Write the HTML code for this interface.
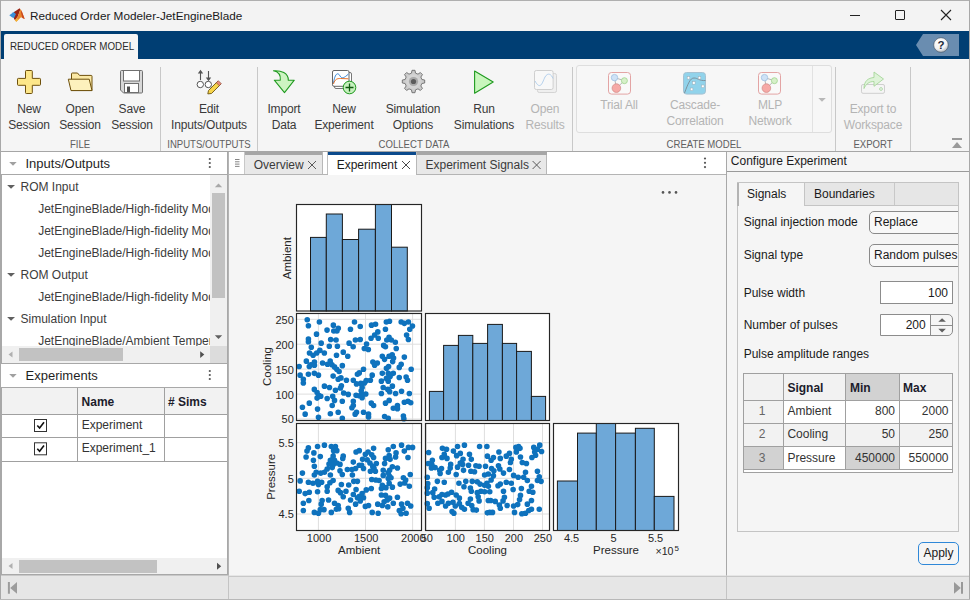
<!DOCTYPE html>
<html><head><meta charset="utf-8">
<style>
*{box-sizing:border-box;margin:0;padding:0}
html,body{width:970px;height:600px;overflow:hidden;background:#f5f5f5}
body{position:relative;font-family:"Liberation Sans",sans-serif;font-size:12px;color:#222}
.a{position:absolute}
.t{position:absolute;white-space:nowrap;line-height:1}
.lbl{position:absolute;white-space:nowrap;line-height:16px;text-align:center;color:#3a3a3a;font-size:12px;letter-spacing:-0.15px}
.dis{color:#b4b4b4}
.sec{position:absolute;white-space:nowrap;line-height:1;text-align:center;color:#606060;font-size:10.3px;transform:scaleX(0.93)}
.sep{position:absolute;width:1px;background:#c8c8c8;top:67px;height:84px}
</style></head><body>

<!-- window frame -->
<div class="a" style="left:0;top:0;width:970px;height:1px;background:#afafaf"></div>
<div class="a" style="left:0;top:0;width:1px;height:600px;background:#a8a8a8"></div>
<div class="a" style="left:969px;top:0;width:1px;height:600px;background:#a8a8a8"></div>

<!-- title bar -->
<div class="a" style="left:1px;top:1px;width:968px;height:30px;background:#f3f3f3"></div>
<div class="t" style="left:30px;top:10px;font-size:11.75px;color:#1a1a1a">Reduced Order Modeler-JetEngineBlade</div>
<!-- window controls -->
<div class="a" style="left:850px;top:15px;width:10px;height:1px;background:#222"></div>
<div class="a" style="left:895px;top:10px;width:10px;height:10px;border:1px solid #222;border-radius:1px"></div>

<!-- blue toolstrip tab bar -->
<div class="a" style="left:1px;top:31px;width:968px;height:28px;background:#003e73"></div>
<div class="a" style="left:4px;top:34px;width:134px;height:25px;background:#f5f5f5;border-radius:2px 2px 0 0"></div>
<div class="t" style="left:9.5px;top:41.3px;font-size:10.6px;transform:scaleX(0.925);transform-origin:0 0;color:#2b2b2b">REDUCED ORDER MODEL</div>

<!-- toolstrip body -->
<div class="a" style="left:1px;top:59px;width:968px;height:92px;background:#f5f5f5"></div>
<div class="a" style="left:1px;top:151px;width:968px;height:1px;background:#a6a6a6"></div>


<!-- toolstrip content -->
<div class="sep" style="left:160px"></div>
<div class="sep" style="left:257px"></div>
<div class="sep" style="left:572px"></div>
<div class="sep" style="left:835px"></div>
<div class="sep" style="left:910px"></div>
<!-- gallery box -->
<div class="a" style="left:576px;top:65px;width:256px;height:68px;border:1px solid #dedede;border-radius:3px;background:#f7f7f7"></div>
<div class="a" style="left:812px;top:66px;width:1px;height:66px;background:#e2e2e2"></div>

<div class="lbl" style="left:0px;top:101px;width:58px">New<br>Session</div>
<div class="lbl" style="left:51px;top:101px;width:58px">Open<br>Session</div>
<div class="lbl" style="left:103px;top:101px;width:58px">Save<br>Session</div>
<div class="lbl" style="left:159px;top:101px;width:100px">Edit<br>Inputs/Outputs</div>
<div class="lbl" style="left:254px;top:101px;width:60px">Import<br>Data</div>
<div class="lbl" style="left:309px;top:101px;width:70px">New<br>Experiment</div>
<div class="lbl" style="left:378px;top:101px;width:70px">Simulation<br>Options</div>
<div class="lbl" style="left:449px;top:101px;width:70px">Run<br>Simulations</div>
<div class="lbl dis" style="left:515px;top:101px;width:60px">Open<br>Results</div>
<div class="lbl dis" style="left:589px;top:97px;width:60px">Trial All</div>
<div class="lbl dis" style="left:659px;top:97px;width:72px">Cascade-<br>Correlation</div>
<div class="lbl dis" style="left:734px;top:97px;width:72px">MLP<br>Network</div>
<div class="lbl dis" style="left:833px;top:101px;width:80px">Export to<br>Workspace</div>

<div class="sec" style="left:50px;top:140px;width:60px">FILE</div>
<div class="sec" style="left:159px;top:140px;width:100px">INPUTS/OUTPUTS</div>
<div class="sec" style="left:364px;top:140px;width:100px">COLLECT DATA</div>
<div class="sec" style="left:654px;top:140px;width:100px">CREATE MODEL</div>
<div class="sec" style="left:833px;top:140px;width:80px">EXPORT</div>

<svg class="a" style="left:0;top:0" width="970" height="152" viewBox="0 0 970 152">
 <!-- title icon -->
 <path d="M9.3 15.3 L13.5 12.3 L15.8 11.2 L17.3 13.5 L14.8 18.3 L12.3 17.5 Z" fill="#3a8fd8"/>
 <path d="M13.8 12.3 L19.6 8.2 L20.3 9.5 L17.8 16.5 L15 20.3 L13.8 18.5 L16 14 Z" fill="#9a2414"/>
 <path d="M19.6 8.2 L21.5 10.5 L24.7 19 L21 17.2 L16.3 21.7 L15 20.3 L17.8 16.5 L20.3 9.5 Z" fill="#e9852c"/>
 <path d="M21.5 10.5 L24.7 19 L22.4 17.9 L21 12.5 Z" fill="#c9461f"/>
 <path d="M15 20.3 L16.3 21.7 L18.6 19.5 L17.2 18.5 Z" fill="#f3b533"/>
 <!-- close X -->
 <path d="M941 10 L951 20 M951 10 L941 20" stroke="#222" stroke-width="1.1"/>
 <!-- help -->
 <path d="M916 45 L923 34 L959 34 L959 56 L923 56 Z" fill="#6a8db0"/>
 <defs><radialGradient id="hg" cx="0.4" cy="0.3" r="0.8"><stop offset="0" stop-color="#fff"/><stop offset="0.6" stop-color="#f2f2f2"/><stop offset="1" stop-color="#9aa3ad"/></radialGradient></defs>
 <circle cx="941" cy="45" r="7.3" fill="url(#hg)" stroke="#3b4a5a" stroke-width="0.6"/>
 <text x="941" y="49.3" font-family="Liberation Sans" font-weight="700" font-size="11.5" fill="#1e2a3a" text-anchor="middle">?</text>
 <!-- plus -->
 <path d="M26.3 70.5 H31.5 Q32.3 70.5 32.3 71.3 V78.4 H39.7 Q40.5 78.4 40.5 79.2 V84.5 Q40.5 85.3 39.7 85.3 H32.3 V92.7 Q32.3 93.5 31.5 93.5 H26.3 Q25.5 93.5 25.5 92.7 V85.3 H18.3 Q17.5 85.3 17.5 84.5 V79.2 Q17.5 78.4 18.3 78.4 H25.5 V71.3 Q25.5 70.5 26.3 70.5 Z" fill="#fde78a" stroke="#6e500c" stroke-width="1"/>
 <!-- folder -->
 <path d="M71.5 90.5 V73.8 q0 -0.8 0.8 -0.8 h5.2 l2 2.4 h11.7 q0.8 0 0.8 0.8 V90.5 Z" fill="#fbe9a6" stroke="#6e500c" stroke-width="1"/>
 <path d="M68.3 79.2 H89.2 L92 90.6 H71 Z" fill="#fdf1bd" stroke="#6e500c" stroke-width="1" stroke-linejoin="round"/>
 <!-- save -->
 <path d="M121.5 70.5 h20 q1 0 1 1 v20.5 q0 1 -1 1 h-18 l-3 -3 v-18.5 q0 -1 1 -1 z" fill="#d8d8d8" stroke="#707070" stroke-width="1"/>
 <rect x="123.5" y="70.5" width="16" height="10.5" fill="#fff" stroke="#707070" stroke-width="1"/>
 <rect x="124.5" y="83.5" width="14" height="9" fill="#fff" stroke="#707070" stroke-width="1"/>
 <rect x="127" y="86.5" width="3" height="5.5" fill="#505050"/>
 <!-- edit io -->
 <path d="M200.5 80 V71.5 M208.5 71 V79.5" stroke="#555" stroke-width="1.1"/>
 <path d="M197.8 73.5 L200.5 69.8 L203.2 73.5 Z M205.8 77.5 L208.5 81.2 L211.2 77.5 Z" fill="#555"/>
 <circle cx="200.3" cy="84.5" r="3.2" fill="#fff" stroke="#555" stroke-width="1"/>
 <circle cx="208.3" cy="84.5" r="3.2" fill="#fff" stroke="#555" stroke-width="1"/>
 <path d="M208.5 90.5 L217.5 81.5 L220.5 84.5 L211.5 93.5 L207.8 93.9 Z" fill="#f7d44a" stroke="#6b5410" stroke-width="0.9" stroke-linejoin="round"/>
 <path d="M216.3 82.7 L218.3 80.7 L221.3 83.7 L219.3 85.7 Z" fill="#e98b7a" stroke="#8a4a3a" stroke-width="0.7"/>
 <!-- import -->
 <path d="M273.5 70.8 C281 70.2 288.5 73 288.3 80.2 H294.3 L284.5 92.6 L274.3 80.2 H280.3 C280.8 75.5 278.5 71.8 273.5 70.8 Z" fill="#cdf4c2" stroke="#219b21" stroke-width="1.1" stroke-linejoin="round"/>
 <!-- new experiment -->
 <rect x="334.5" y="72.5" width="17" height="16" rx="1.5" fill="#fff" stroke="#777" stroke-width="1"/>
 <rect x="332.5" y="70.5" width="16.5" height="15.8" rx="1.5" fill="#fff" stroke="#666" stroke-width="1"/>
 <path d="M333.5 83 C335 73 338 72 340 76 C342 79 344 78 348.5 74" fill="none" stroke="#3c8ad8" stroke-width="1"/>
 <path d="M333.5 84 C335 79 337 78.5 340.5 78.5 L348.5 78.8" fill="none" stroke="#e8742a" stroke-width="1"/>
 <circle cx="349.5" cy="87.5" r="6.3" fill="#c6f0bd" stroke="#1f9a1f" stroke-width="1"/>
 <path d="M345.5 87.5 H353.5 M349.5 83.5 V91.5" stroke="#0f5a0f" stroke-width="1.3"/>
 <!-- gear -->
 <defs><radialGradient id="gg" cx="0.5" cy="0.5" r="0.5"><stop offset="0" stop-color="#bbb"/><stop offset="0.5" stop-color="#d6d6d6"/><stop offset="1" stop-color="#c4c4c4"/></radialGradient></defs>
 <path id="gear" d="M424.70 80.00 L424.70 83.00 L421.86 83.51 L420.83 85.99 L422.48 88.36 L420.36 90.48 L417.99 88.83 L415.51 89.86 L415.00 92.70 L412.00 92.70 L411.49 89.86 L409.01 88.83 L406.64 90.48 L404.52 88.36 L406.17 85.99 L405.14 83.51 L402.30 83.00 L402.30 80.00 L405.14 79.49 L406.17 77.01 L404.52 74.64 L406.64 72.52 L409.01 74.17 L411.49 73.14 L412.00 70.30 L415.00 70.30 L415.51 73.14 L417.99 74.17 L420.36 72.52 L422.48 74.64 L420.83 77.01 L421.86 79.49 Z" fill="url(#gg)" stroke="#6e6e6e" stroke-width="0.9"/>
 <circle cx="413.5" cy="81.5" r="4.6" fill="#a9a9a9"/><circle cx="413.5" cy="81.5" r="2.6" fill="#5c5c5c"/>
 <!-- run -->
 <path d="M474.6 71 L493.2 82 L474.6 93.2 Z" fill="#c9f6bd" stroke="#1f9a1f" stroke-width="1.1" stroke-linejoin="round"/>
 <!-- open results disabled -->
 <rect x="537.5" y="73.5" width="19" height="19" rx="1.8" fill="#efefef" stroke="#d4d4d4" stroke-width="1"/>
 <rect x="534.5" y="70.5" width="18.6" height="19" rx="1.8" fill="#f8f8f8" stroke="#cfcfcf" stroke-width="1"/>
 <path d="M535 81 C537 84.5 538.5 86 540 85.5 C542 85 543.5 80 545 77 C546.5 74.5 548 73.8 549.5 74.3 C551 74.8 552.3 76.5 553 78.5" fill="none" stroke="#a9c9ea" stroke-width="0.9"/>
 <!-- trial all -->
 <rect x="608.5" y="72.5" width="22" height="21.6" rx="3" fill="#f9f9f9" stroke="#e3a4a4" stroke-width="1"/>
 <path d="M614.5 77.6 L624.4 80.7 M614.5 77.6 L616.4 88.1 M624.4 80.7 L616.4 88.1" stroke="#9a9a9a" stroke-width="0.7"/>
 <circle cx="614.5" cy="77.6" r="3.2" fill="#cfe2f6" stroke="#9dbfe2" stroke-width="0.8"/>
 <circle cx="624.4" cy="80.7" r="3" fill="#d6f0c9" stroke="#9fd48e" stroke-width="0.8"/>
 <circle cx="616.4" cy="88.1" r="4.3" fill="#f6a9a6" stroke="#d48f8c" stroke-width="0.8"/>
 <!-- cascade -->
 <rect x="683.5" y="72.5" width="22" height="21.6" rx="3" fill="#91d3eb" stroke="#a6c2d2" stroke-width="1"/>
 <path d="M684.5 93 C688 84 690 78 694 78 C698 78 699 81 705.5 80.5" fill="none" stroke="#7a8a94" stroke-width="0.9"/>
 <g fill="#fff" stroke="#9aaab4" stroke-width="0.5">
  <rect x="687.2" y="76.5" width="2.6" height="2.6"/><rect x="698.2" y="76.5" width="2.6" height="2.6"/>
  <rect x="692.5" y="81.6" width="2.6" height="2.6"/><rect x="701.5" y="85" width="2.6" height="2.6"/>
  <rect x="690.3" y="88" width="2.6" height="2.6"/>
 </g>
 <!-- mlp -->
 <rect x="758.5" y="72.5" width="22" height="21.6" rx="3" fill="#f9f9f9" stroke="#e3a4a4" stroke-width="1"/>
 <path d="M764.5 77.6 L774.4 80.7 M764.5 77.6 L766.4 88.1 M774.4 80.7 L766.4 88.1" stroke="#9a9a9a" stroke-width="0.7"/>
 <circle cx="764.5" cy="77.6" r="3.2" fill="#cfe2f6" stroke="#9dbfe2" stroke-width="0.8"/>
 <circle cx="774.4" cy="80.7" r="3" fill="#d6f0c9" stroke="#9fd48e" stroke-width="0.8"/>
 <circle cx="766.4" cy="88.1" r="4.3" fill="#f6a9a6" stroke="#d48f8c" stroke-width="0.8"/>
 <!-- gallery arrow -->
 <path d="M818.3 98 L825.8 98 L822 101.8 Z" fill="#b8b8b8"/>
 <!-- export -->
 <rect x="861.5" y="84.5" width="23" height="8.8" rx="1.5" fill="none" stroke="#cfcfcf" stroke-width="1"/>
 <circle cx="881" cy="89" r="1.4" fill="none" stroke="#a8d8a0" stroke-width="0.9"/>
 <path d="M864 88.5 C864 81 868 78 874 77.5 V72 L883.5 79 L874 86.3 V81.5 C869 81.5 866 84 864 88.5 Z" fill="#def3d8" stroke="#a6d69a" stroke-width="0.9" stroke-linejoin="round"/>
 <!-- collapse -->
 <path d="M952 139 H962" stroke="#9a9a9a" stroke-width="2"/>
 <path d="M952 148 L957 142 L962 148 Z" fill="#9a9a9a"/>
</svg>

<!-- left panel -->
<div class="a" style="left:1px;top:152px;width:227px;height:424px;background:#fff"></div>
<div class="a" style="left:227px;top:152px;width:1px;height:424px;background:#a8a8a8"></div>
<!-- I/O header -->
<svg class="a" style="left:0;top:152px" width="228" height="24"><path d="M9.2 10 L16.7 10 L13 13.7 Z" fill="#a0a0a0"/>
<circle cx="209.8" cy="7" r="1.1" fill="#555"/><circle cx="209.8" cy="11" r="1.1" fill="#555"/><circle cx="209.8" cy="15" r="1.1" fill="#555"/></svg>
<div class="t" style="left:25.5px;top:157px;font-size:13px;color:#1f1f1f">Inputs/Outputs</div>
<div class="a" style="left:1px;top:174px;width:227px;height:1px;background:#a8a8a8"></div>
<div class="a" style="left:1px;top:175px;width:1px;height:189px;background:#a8a8a8"></div>
<!-- tree -->
<div class="a" style="left:2px;top:175px;width:208px;height:171px;overflow:hidden">
 <svg class="a" style="left:0;top:0" width="20" height="171">
  <path d="M5.1 10 L13 10 L9.05 13.75 Z M5.1 98 L13 98 L9.05 101.75 Z M5.1 142 L13 142 L9.05 145.75 Z" fill="#606060"/>
 </svg>
 <div class="t" style="left:18.5px;top:5.9px;color:#3c3c3c">ROM Input</div>
 <div class="t" style="left:36.2px;top:27.9px;color:#3c3c3c">JetEngineBlade/High-fidelity Model/Ambient</div>
 <div class="t" style="left:36.2px;top:49.9px;color:#3c3c3c">JetEngineBlade/High-fidelity Model/Cooling</div>
 <div class="t" style="left:36.2px;top:71.9px;color:#3c3c3c">JetEngineBlade/High-fidelity Model/Pressure</div>
 <div class="t" style="left:18.5px;top:93.9px;color:#3c3c3c">ROM Output</div>
 <div class="t" style="left:36.2px;top:115.9px;color:#3c3c3c">JetEngineBlade/High-fidelity Model/Stress</div>
 <div class="t" style="left:18.5px;top:137.9px;color:#3c3c3c">Simulation Input</div>
 <div class="t" style="left:36.2px;top:159.9px;color:#3c3c3c">JetEngineBlade/Ambient Temperature</div>
</div>
<!-- v scroll -->
<div class="a" style="left:210px;top:175px;width:17px;height:171px;background:#f0f0f0"></div>
<div class="a" style="left:212px;top:193px;width:13px;height:105px;background:#c2c2c2"></div>
<svg class="a" style="left:210px;top:175px" width="17" height="188">
 <path d="M4.8 12.2 L12.2 12.2 L8.5 8.6 Z" fill="#a8a8a8"/>
 <path d="M4.8 160.2 L12.2 160.2 L8.5 164 Z" fill="#606060"/>
</svg>
<!-- h scroll -->
<div class="a" style="left:2px;top:346px;width:208px;height:17px;background:#f0f0f0"></div>
<div class="a" style="left:210px;top:346px;width:17px;height:17px;background:#dcdcdc"></div>
<div class="a" style="left:19px;top:348px;width:104px;height:12.5px;background:#c2c2c2"></div>
<svg class="a" style="left:0;top:346px" width="210" height="17">
 <path d="M12.5 5.5 L12.5 11.5 L8.5 8.5 Z" fill="#b0b0b0"/>
 <path d="M200.2 5.2 L200.2 12 L204.3 8.6 Z" fill="#505050"/>
</svg>
<div class="a" style="left:1px;top:363px;width:227px;height:1px;background:#a8a8a8"></div>
<!-- experiments header -->
<svg class="a" style="left:0;top:364px" width="20" height="23"><path d="M9.2 10 L16.7 10 L13 13.7 Z" fill="#a0a0a0"/></svg>
<svg class="a" style="left:200px;top:364px" width="20" height="23"><circle cx="9.8" cy="7" r="1.1" fill="#555"/><circle cx="9.8" cy="11" r="1.1" fill="#555"/><circle cx="9.8" cy="15" r="1.1" fill="#555"/></svg>
<div class="t" style="left:25.5px;top:368.7px;font-size:13px;color:#1f1f1f">Experiments</div>
<div class="a" style="left:1px;top:387px;width:227px;height:1px;background:#a8a8a8"></div>
<div class="a" style="left:1px;top:387px;width:1px;height:188px;background:#a8a8a8"></div>
<!-- experiments table -->
<div class="a" style="left:2px;top:388px;width:225px;height:26px;background:#f2f2f2"></div>
<div class="a" style="left:2px;top:414px;width:225px;height:1px;background:#a0a0a0"></div>
<div class="a" style="left:2px;top:437px;width:225px;height:1px;background:#a0a0a0"></div>
<div class="a" style="left:2px;top:461px;width:225px;height:1px;background:#a0a0a0"></div>
<div class="a" style="left:77px;top:388px;width:1px;height:74px;background:#a0a0a0"></div>
<div class="a" style="left:164px;top:388px;width:1px;height:74px;background:#a0a0a0"></div>
<div class="t" style="left:81.6px;top:395.8px;font-weight:700;color:#1c1c2c">Name</div>
<div class="t" style="left:168px;top:395.8px;font-weight:700;color:#1c1c2c"># Sims</div>
<div class="t" style="left:81.7px;top:418.8px;color:#333">Experiment</div>
<div class="t" style="left:81.7px;top:442.3px;color:#333">Experiment_1</div>
<svg class="a" style="left:30px;top:415px" width="20" height="46">
 <rect x="4.5" y="4.5" width="12" height="12" fill="#fff" stroke="#333" stroke-width="1"/>
 <path d="M7.3 10.5 L9.6 13 L14 7.3" fill="none" stroke="#111" stroke-width="1.6"/>
 <rect x="4.5" y="27.8" width="12" height="12" fill="#fff" stroke="#333" stroke-width="1"/>
 <path d="M7.3 33.8 L9.6 36.3 L14 30.6" fill="none" stroke="#111" stroke-width="1.6"/>
</svg>
<!-- bottom h scroll -->
<div class="a" style="left:2px;top:558px;width:225px;height:16px;background:#f0f0f0"></div>
<div class="a" style="left:19px;top:560px;width:138px;height:12.5px;background:#c2c2c2"></div>
<svg class="a" style="left:0;top:558px" width="228" height="17">
 <path d="M12.5 5 L12.5 11 L8.5 8 Z" fill="#b0b0b0"/>
 <path d="M217 4.8 L217 11.8 L221.2 8.3 Z" fill="#505050"/>
</svg>
<div class="a" style="left:1px;top:574px;width:227px;height:1px;background:#a8a8a8"></div>


<!-- doc area -->
<div class="a" style="left:228px;top:152px;width:1px;height:424px;background:#b4b4b4"></div>
<div class="a" style="left:229px;top:152px;width:497px;height:424px;background:#f5f5f5"></div>
<div class="a" style="left:229px;top:152px;width:497px;height:22px;background:#fff"></div>
<div class="a" style="left:229px;top:174px;width:497px;height:1px;background:#b4b4b4"></div>
<div class="a" style="left:244px;top:152px;width:1px;height:22px;background:#c8c8c8"></div>
<svg class="a" style="left:229px;top:152px" width="16" height="22"><path d="M6 7.5 H10.5 M6 9.8 H10.5 M6 12.1 H10.5 M6 14.4 H10.5" stroke="#777" stroke-width="0.9"/></svg>
<!-- tabs -->
<div class="a" style="left:245px;top:152px;width:78px;height:23px;background:#e8e8e8;border-right:1px solid #b8b8b8;border-bottom:1px solid #b4b4b4"></div>
<div class="a" style="left:245px;top:152px;width:77px;height:3px;background:#a6a6a6"></div>
<div class="a" style="left:327px;top:152px;width:1px;height:22px;background:#c0c0c0"></div>
<div class="a" style="left:328px;top:152px;width:88px;height:23px;background:#fff"></div>
<div class="a" style="left:328px;top:152px;width:88px;height:3px;background:#0c4a8c"></div>
<div class="a" style="left:416px;top:152px;width:131px;height:23px;background:#e8e8e8;border-left:1px solid #b8b8b8;border-right:1px solid #b8b8b8;border-bottom:1px solid #b4b4b4"></div>
<div class="a" style="left:417px;top:152px;width:130px;height:3px;background:#a6a6a6"></div>
<div class="t" style="left:253.7px;top:159px;color:#3a3a3a">Overview</div>
<div class="t" style="left:336.7px;top:159px;color:#1a1a1a">Experiment</div>
<div class="t" style="left:425.5px;top:159px;color:#3a3a3a">Experiment Signals</div>
<svg class="a" style="left:229px;top:152px" width="497" height="23">
 <path d="M79 9 L87 17 M87 9 L79 17" stroke="#5a5a5a" stroke-width="1"/>
 <path d="M173 9 L181 17 M181 9 L173 17" stroke="#4a4a4a" stroke-width="1"/>
 <path d="M303.6 9 L311.6 17 M311.6 9 L303.6 17" stroke="#5a5a5a" stroke-width="1"/>
 <circle cx="476" cy="6.5" r="1.1" fill="#555"/><circle cx="476" cy="10.8" r="1.1" fill="#555"/><circle cx="476" cy="15.1" r="1.1" fill="#555"/>
</svg>
<svg class="a" style="left:655px;top:185px" width="30" height="15">
 <circle cx="8" cy="7.4" r="1.3" fill="#555"/><circle cx="14.5" cy="7.4" r="1.3" fill="#555"/><circle cx="21" cy="7.4" r="1.3" fill="#555"/>
</svg>
<!-- PLOTS -->
<svg class="a" style="left:229px;top:175px" width="497" height="401" viewBox="229 175 497 401">
<rect x="296.5" y="204.5" width="125" height="106.5" fill="#fff"/>
<rect x="296.5" y="313.5" width="125" height="107" fill="#fff"/>
<rect x="425.5" y="313.5" width="124" height="107" fill="#fff"/>
<rect x="296.5" y="423.5" width="125" height="107" fill="#fff"/>
<rect x="425.5" y="423.5" width="124" height="107" fill="#fff"/>
<rect x="553.5" y="423.5" width="125" height="107" fill="#fff"/>
<path d="M318.4 313.5V420.5M318.4 423.5V530.5M365.5 313.5V420.5M365.5 423.5V530.5M412.6 313.5V420.5M412.6 423.5V530.5M296.5 419H421.5M426.4 423.5V530.5M296.5 394.1H421.5M455.4 423.5V530.5M296.5 369.1H421.5M484.4 423.5V530.5M296.5 344.2H421.5M513.5 423.5V530.5M296.5 319.3H421.5M542.5 423.5V530.5M296.5 514H421.5M425.5 514H549.5M296.5 478.3H421.5M425.5 478.3H549.5M296.5 442.7H421.5M425.5 442.7H549.5" stroke="#dedede" stroke-width="1" fill="none"/>
<rect x="310.5" y="237.4" width="15.8" height="73.6" fill="#6ea8d8" stroke="#1a1a1a" stroke-width="1"/>
<rect x="326.3" y="214" width="16.1" height="97" fill="#6ea8d8" stroke="#1a1a1a" stroke-width="1"/>
<rect x="342.4" y="239.5" width="16.2" height="71.5" fill="#6ea8d8" stroke="#1a1a1a" stroke-width="1"/>
<rect x="358.6" y="229.2" width="16.8" height="81.8" fill="#6ea8d8" stroke="#1a1a1a" stroke-width="1"/>
<rect x="375.4" y="204.5" width="16.1" height="106.5" fill="#6ea8d8" stroke="#1a1a1a" stroke-width="1"/>
<rect x="391.5" y="247.2" width="15.8" height="63.8" fill="#6ea8d8" stroke="#1a1a1a" stroke-width="1"/>
<rect x="429.4" y="391.4" width="14.2" height="29.1" fill="#6ea8d8" stroke="#1a1a1a" stroke-width="1"/>
<rect x="443.6" y="345.4" width="14.8" height="75.1" fill="#6ea8d8" stroke="#1a1a1a" stroke-width="1"/>
<rect x="458.4" y="335.4" width="14.4" height="85.1" fill="#6ea8d8" stroke="#1a1a1a" stroke-width="1"/>
<rect x="472.8" y="343.4" width="14.8" height="77.1" fill="#6ea8d8" stroke="#1a1a1a" stroke-width="1"/>
<rect x="487.6" y="324.4" width="14.8" height="96.1" fill="#6ea8d8" stroke="#1a1a1a" stroke-width="1"/>
<rect x="502.4" y="343.4" width="14.2" height="77.1" fill="#6ea8d8" stroke="#1a1a1a" stroke-width="1"/>
<rect x="516.6" y="351.4" width="14.8" height="69.1" fill="#6ea8d8" stroke="#1a1a1a" stroke-width="1"/>
<rect x="531.4" y="396.4" width="14.2" height="24.1" fill="#6ea8d8" stroke="#1a1a1a" stroke-width="1"/>
<rect x="557.4" y="481" width="20.1" height="49.5" fill="#6ea8d8" stroke="#1a1a1a" stroke-width="1"/>
<rect x="577.5" y="433.1" width="18.8" height="97.4" fill="#6ea8d8" stroke="#1a1a1a" stroke-width="1"/>
<rect x="596.3" y="423.5" width="19.3" height="107" fill="#6ea8d8" stroke="#1a1a1a" stroke-width="1"/>
<rect x="615.6" y="433.1" width="19.8" height="97.4" fill="#6ea8d8" stroke="#1a1a1a" stroke-width="1"/>
<rect x="635.4" y="428.3" width="18.9" height="102.2" fill="#6ea8d8" stroke="#1a1a1a" stroke-width="1"/>
<rect x="654.3" y="496.4" width="19.7" height="34.1" fill="#6ea8d8" stroke="#1a1a1a" stroke-width="1"/>
<path d="M307.24 319.75h0.02M308.41 325.78h0.02M319.39 322.00h0.02M354.50 322.00h0.02M350.45 329.20h0.02M327.04 330.10h0.02M333.34 325.15h0.02M338.29 328.30h0.02M333.79 331.00h0.02M336.94 331.00h0.02M316.51 334.15h0.02M308.41 339.10h0.02M308.41 341.80h0.02M330.64 339.55h0.02M336.04 340.00h0.02M355.40 340.00h0.02M321.19 343.15h0.02M349.10 343.15h0.02M353.15 346.75h0.02M311.29 347.20h0.02M329.29 346.30h0.02M337.39 346.30h0.02M309.49 353.05h0.02M313.09 355.30h0.02M319.84 350.35h0.02M316.69 353.05h0.02M324.34 353.05h0.02M343.24 352.15h0.02M336.49 355.30h0.02M347.75 356.20h0.02M306.34 361.15h0.02M314.44 362.05h0.02M310.84 364.76h0.02M314.44 365.21h0.02M322.54 362.95h0.02M330.19 361.15h0.02M327.49 364.31h0.02M331.99 364.76h0.02M342.34 365.66h0.02M299.14 366.56h0.02M360.24 326.50h0.02M371.49 325.15h0.02M375.54 324.25h0.02M386.34 322.00h0.02M389.49 321.28h0.02M401.19 322.00h0.02M404.34 323.35h0.02M408.40 322.00h0.02M412.45 326.05h0.02M409.75 329.20h0.02M385.44 329.20h0.02M377.79 331.90h0.02M374.64 335.05h0.02M371.04 338.20h0.02M378.24 338.20h0.02M360.24 339.55h0.02M406.59 335.05h0.02M408.40 339.55h0.02M389.04 337.30h0.02M386.79 340.00h0.02M391.29 340.00h0.02M395.34 342.25h0.02M366.54 344.05h0.02M364.29 348.55h0.02M368.34 349.45h0.02M383.64 345.40h0.02M385.44 346.75h0.02M396.24 348.55h0.02M382.29 356.20h0.02M384.54 359.35h0.02M389.04 356.20h0.02M392.19 354.85h0.02M393.54 358.00h0.02M392.64 361.60h0.02M404.34 357.10h0.02M372.84 362.05h0.02M377.34 362.95h0.02M374.64 365.21h0.02M401.19 364.31h0.02M388.59 366.56h0.02M309.29 366.46h0.02M334.50 366.92h0.02M336.79 369.21h0.02M339.09 371.50h0.02M300.12 375.17h0.02M308.37 374.25h0.02M314.33 373.34h0.02M318.45 375.17h0.02M303.33 379.30h0.02M303.33 382.96h0.02M333.13 376.09h0.02M338.17 379.30h0.02M340.92 377.92h0.02M346.42 380.21h0.02M353.30 380.21h0.02M356.51 383.88h0.02M357.42 374.25h0.02M359.26 372.88h0.02M324.41 386.17h0.02M329.46 387.55h0.02M314.33 389.38h0.02M317.08 392.59h0.02M318.45 395.34h0.02M320.75 396.26h0.02M317.08 398.09h0.02M335.42 390.30h0.02M340.46 388.01h0.02M341.38 385.71h0.02M343.67 393.05h0.02M348.25 394.42h0.02M356.05 395.34h0.02M359.26 395.80h0.02M327.17 398.55h0.02M332.67 396.26h0.02M334.50 400.38h0.02M342.29 401.30h0.02M309.29 403.14h0.02M302.41 407.26h0.02M332.21 405.43h0.02M353.30 401.30h0.02M353.30 405.43h0.02M351.92 407.72h0.02M317.54 409.10h0.02M305.16 414.14h0.02M330.37 413.68h0.02M338.17 412.30h0.02M355.13 414.14h0.02M356.51 412.30h0.02M318.45 417.35h0.02M342.29 418.26h0.02M363.49 369.21h0.02M386.41 368.29h0.02M399.25 367.38h0.02M411.17 369.21h0.02M372.20 375.17h0.02M382.29 373.34h0.02M388.25 373.34h0.02M393.29 373.34h0.02M390.08 376.54h0.02M386.41 378.38h0.02M388.25 381.13h0.02M381.37 381.13h0.02M399.25 377.46h0.02M406.13 377.00h0.02M407.50 380.21h0.02M370.37 380.21h0.02M366.24 380.67h0.02M364.41 382.96h0.02M360.74 383.42h0.02M362.12 387.55h0.02M361.20 390.76h0.02M362.57 394.42h0.02M365.78 393.97h0.02M362.12 397.63h0.02M383.21 387.55h0.02M392.37 386.17h0.02M387.79 389.38h0.02M389.62 391.67h0.02M381.37 393.51h0.02M395.58 393.51h0.02M401.54 391.22h0.02M409.34 393.51h0.02M389.17 400.38h0.02M385.50 403.14h0.02M371.29 403.14h0.02M373.58 405.43h0.02M404.29 402.22h0.02M407.96 401.30h0.02M410.71 402.68h0.02M393.29 408.18h0.02M397.42 405.43h0.02M397.42 408.64h0.02M363.49 412.30h0.02M368.53 414.14h0.02M368.53 416.89h0.02M384.58 416.43h0.02M388.25 418.26h0.02M403.38 415.97h0.02M403.84 418.72h0.02" stroke="#0e72bd" stroke-width="5.6" stroke-linecap="round" fill="none"/>
<path d="M308.37 447.88h0.02M306.99 451.09h0.02M313.87 452.92h0.02M306.08 457.05h0.02M313.41 460.26h0.02M317.54 446.50h0.02M324.41 445.13h0.02M320.29 456.59h0.02M331.29 446.50h0.02M335.42 446.50h0.02M333.58 450.63h0.02M336.79 450.63h0.02M333.13 456.13h0.02M330.37 460.26h0.02M334.50 460.26h0.02M329.00 463.93h0.02M333.13 464.84h0.02M336.79 463.01h0.02M340.00 464.38h0.02M343.21 456.13h0.02M342.75 458.42h0.02M314.33 466.22h0.02M302.41 473.10h0.02M314.33 474.93h0.02M316.16 472.18h0.02M320.75 473.10h0.02M324.41 472.18h0.02M327.17 468.97h0.02M332.21 467.59h0.02M330.37 474.93h0.02M340.00 470.80h0.02M342.29 474.47h0.02M347.34 469.43h0.02M351.92 469.43h0.02M355.59 468.51h0.02M353.30 462.09h0.02M356.05 452.01h0.02M359.26 450.63h0.02M352.38 474.93h0.02M359.26 465.30h0.02M300.12 480.89h0.02M308.37 482.26h0.02M312.95 483.18h0.02M317.54 481.35h0.02M321.66 482.26h0.02M329.92 482.72h0.02M333.13 480.43h0.02M341.38 484.56h0.02M353.76 481.35h0.02M357.42 481.35h0.02M348.71 485.02h0.02M373.58 448.34h0.02M368.08 452.01h0.02M365.33 454.30h0.02M371.74 454.76h0.02M373.58 457.51h0.02M362.57 459.34h0.02M367.16 459.80h0.02M369.91 463.01h0.02M376.33 463.47h0.02M361.66 465.30h0.02M363.49 468.51h0.02M372.66 466.22h0.02M374.04 468.51h0.02M370.37 471.26h0.02M375.41 471.26h0.02M388.25 449.71h0.02M393.29 446.50h0.02M401.54 445.13h0.02M408.42 447.42h0.02M412.55 447.42h0.02M404.29 451.09h0.02M396.04 452.92h0.02M395.58 457.05h0.02M389.17 455.67h0.02M385.50 458.42h0.02M390.08 459.34h0.02M384.58 463.47h0.02M392.37 466.68h0.02M397.42 468.05h0.02M389.62 470.34h0.02M383.21 470.34h0.02M388.25 472.64h0.02M383.21 475.39h0.02M389.17 475.85h0.02M391.00 477.68h0.02M371.74 479.51h0.02M375.87 479.97h0.02M379.08 480.43h0.02M407.96 457.51h0.02M410.25 474.47h0.02M403.38 477.68h0.02M405.67 479.97h0.02M389.17 483.18h0.02M400.17 484.10h0.02M318.45 484.42h0.02M327.17 486.71h0.02M327.17 491.30h0.02M299.20 491.30h0.02M305.16 493.59h0.02M309.29 492.21h0.02M317.54 491.75h0.02M303.33 503.22h0.02M308.83 500.46h0.02M303.33 510.55h0.02M322.12 500.46h0.02M321.21 504.13h0.02M314.33 512.38h0.02M318.45 513.30h0.02M320.29 509.63h0.02M323.96 509.63h0.02M328.54 500.01h0.02M334.50 503.22h0.02M338.17 505.51h0.02M336.33 509.18h0.02M338.63 508.72h0.02M331.29 512.38h0.02M338.17 490.38h0.02M340.46 492.67h0.02M345.96 491.30h0.02M343.21 496.80h0.02M350.55 500.01h0.02M348.25 508.26h0.02M349.63 512.38h0.02M356.05 489.46h0.02M353.30 494.50h0.02M357.42 497.71h0.02M355.59 504.13h0.02M388.25 478.46h0.02M404.75 483.04h0.02M409.34 486.25h0.02M382.29 485.34h0.02M381.37 488.54h0.02M385.96 487.63h0.02M392.37 487.17h0.02M371.29 488.54h0.02M366.24 489.92h0.02M362.12 493.59h0.02M359.37 496.34h0.02M363.49 497.71h0.02M360.28 500.92h0.02M365.33 506.42h0.02M368.53 505.51h0.02M381.37 494.96h0.02M385.50 495.42h0.02M389.62 498.17h0.02M387.33 500.01h0.02M384.12 501.84h0.02M377.70 504.13h0.02M382.29 505.51h0.02M387.79 506.88h0.02M393.29 503.22h0.02M397.42 497.26h0.02M401.54 504.13h0.02M402.92 508.26h0.02M399.25 510.55h0.02M401.09 513.76h0.02M406.13 513.30h0.02M407.50 503.22h0.02M410.71 505.97h0.02M372.20 512.38h0.02M378.16 513.30h0.02" stroke="#0e72bd" stroke-width="5.6" stroke-linecap="round" fill="none"/>
<path d="M428.66 452.46h0.02M442.41 448.34h0.02M446.54 449.26h0.02M444.25 454.30h0.02M441.95 457.51h0.02M447.00 458.42h0.02M432.33 460.26h0.02M428.20 463.47h0.02M431.87 464.84h0.02M431.41 468.05h0.02M435.08 467.59h0.02M441.49 468.51h0.02M439.66 470.34h0.02M440.12 473.55h0.02M450.66 464.38h0.02M450.21 468.05h0.02M448.37 472.18h0.02M453.41 451.09h0.02M456.62 455.67h0.02M457.54 446.50h0.02M464.42 445.13h0.02M460.29 453.38h0.02M463.04 459.34h0.02M460.29 463.01h0.02M462.58 464.38h0.02M457.54 467.14h0.02M463.50 470.34h0.02M456.17 474.47h0.02M469.46 454.30h0.02M471.29 459.34h0.02M468.54 465.30h0.02M475.88 465.76h0.02M479.09 466.22h0.02M470.84 471.26h0.02M474.50 471.72h0.02M479.55 446.50h0.02M485.51 466.22h0.02M486.88 446.50h0.02M487.34 456.13h0.02M484.59 474.93h0.02M488.26 474.01h0.02M427.28 477.22h0.02M427.74 483.64h0.02M437.37 481.35h0.02M444.25 482.26h0.02M458.92 483.18h0.02M465.79 481.35h0.02M472.21 481.35h0.02M477.25 481.81h0.02M480.01 484.10h0.02M486.88 483.18h0.02M498.91 452.01h0.02M500.29 458.42h0.02M493.41 457.51h0.02M491.12 460.26h0.02M506.25 456.13h0.02M509.45 453.38h0.02M511.29 459.34h0.02M510.37 462.55h0.02M515.87 447.42h0.02M518.62 446.50h0.02M516.33 452.01h0.02M520.00 448.34h0.02M520.46 457.05h0.02M522.29 462.55h0.02M526.42 463.47h0.02M533.75 447.42h0.02M539.71 445.13h0.02M537.42 449.26h0.02M541.55 451.55h0.02M534.67 452.01h0.02M531.92 457.51h0.02M535.59 455.22h0.02M498.45 465.76h0.02M499.83 468.97h0.02M503.49 473.10h0.02M491.57 468.51h0.02M493.87 470.80h0.02M493.41 475.85h0.02M491.12 479.97h0.02M509.45 469.43h0.02M513.58 475.39h0.02M518.17 477.22h0.02M523.67 477.22h0.02M527.33 480.43h0.02M525.50 472.18h0.02M537.42 471.26h0.02M539.25 476.76h0.02M537.42 480.43h0.02M541.09 481.35h0.02M500.29 484.10h0.02M506.25 482.26h0.02M511.29 483.18h0.02M427.28 487.63h0.02M434.62 489.00h0.02M432.78 492.67h0.02M427.28 493.13h0.02M434.16 497.26h0.02M439.20 496.80h0.02M441.95 494.50h0.02M445.62 494.96h0.02M447.91 494.05h0.02M451.58 492.21h0.02M441.95 501.38h0.02M437.83 503.22h0.02M427.28 503.67h0.02M429.12 508.26h0.02M445.62 505.97h0.02M448.37 503.22h0.02M452.96 502.30h0.02M455.25 505.97h0.02M452.04 511.47h0.02M453.87 513.30h0.02M456.17 494.96h0.02M459.37 498.17h0.02M459.37 503.67h0.02M461.67 507.34h0.02M464.42 509.18h0.02M463.96 486.71h0.02M470.38 488.09h0.02M471.29 491.30h0.02M477.25 492.67h0.02M480.92 491.30h0.02M484.59 485.34h0.02M484.59 491.75h0.02M478.17 496.80h0.02M479.09 500.92h0.02M468.09 503.22h0.02M470.38 499.09h0.02M471.75 505.51h0.02M473.13 509.63h0.02M476.34 510.09h0.02M487.34 512.84h0.02M488.26 500.46h0.02M488.37 486.25h0.02M489.74 491.75h0.02M497.99 485.79h0.02M503.49 491.30h0.02M513.12 489.46h0.02M504.41 497.26h0.02M503.04 500.92h0.02M490.66 500.46h0.02M495.24 501.38h0.02M499.37 505.05h0.02M500.29 508.26h0.02M507.16 505.51h0.02M513.58 505.97h0.02M517.71 504.59h0.02M519.54 499.55h0.02M520.46 495.42h0.02M521.37 488.54h0.02M531.46 486.25h0.02M529.17 491.30h0.02M532.84 492.21h0.02M531.46 500.46h0.02M527.33 504.13h0.02M528.71 510.55h0.02M531.46 509.18h0.02M539.25 509.18h0.02M514.50 512.38h0.02M521.83 513.76h0.02M525.50 513.30h0.02M489.74 512.38h0.02M492.49 512.38h0.02" stroke="#0e72bd" stroke-width="5.6" stroke-linecap="round" fill="none"/>
<rect x="296.5" y="204.5" width="125" height="106.5" fill="none" stroke="#262626" stroke-width="1.15"/>
<rect x="296.5" y="313.5" width="125" height="107" fill="none" stroke="#262626" stroke-width="1.15"/>
<rect x="425.5" y="313.5" width="124" height="107" fill="none" stroke="#262626" stroke-width="1.15"/>
<rect x="296.5" y="423.5" width="125" height="107" fill="none" stroke="#262626" stroke-width="1.15"/>
<rect x="425.5" y="423.5" width="124" height="107" fill="none" stroke="#262626" stroke-width="1.15"/>
<rect x="553.5" y="423.5" width="125" height="107" fill="none" stroke="#262626" stroke-width="1.15"/>
<text x="293.8" y="323.7" text-anchor="end" font-family="Liberation Sans" font-size="11" fill="#262626">250</text>
<text x="293.8" y="348.6" text-anchor="end" font-family="Liberation Sans" font-size="11" fill="#262626">200</text>
<text x="293.8" y="373.5" text-anchor="end" font-family="Liberation Sans" font-size="11" fill="#262626">150</text>
<text x="293.8" y="398.5" text-anchor="end" font-family="Liberation Sans" font-size="11" fill="#262626">100</text>
<text x="293.8" y="423.4" text-anchor="end" font-family="Liberation Sans" font-size="11" fill="#262626">50</text>
<text x="293.8" y="447.1" text-anchor="end" font-family="Liberation Sans" font-size="11" fill="#262626">5.5</text>
<text x="293.8" y="482.7" text-anchor="end" font-family="Liberation Sans" font-size="11" fill="#262626">5</text>
<text x="293.8" y="518.4" text-anchor="end" font-family="Liberation Sans" font-size="11" fill="#262626">4.5</text>
<text x="319.1" y="542.2" text-anchor="middle" font-family="Liberation Sans" font-size="11" fill="#262626">1000</text>
<text x="366.2" y="542.2" text-anchor="middle" font-family="Liberation Sans" font-size="11" fill="#262626">1500</text>
<text x="413.3" y="542.2" text-anchor="middle" font-family="Liberation Sans" font-size="11" fill="#262626">2000</text>
<text x="426.8" y="542.2" text-anchor="middle" font-family="Liberation Sans" font-size="11" fill="#262626">50</text>
<text x="455.8" y="542.2" text-anchor="middle" font-family="Liberation Sans" font-size="11" fill="#262626">100</text>
<text x="484.8" y="542.2" text-anchor="middle" font-family="Liberation Sans" font-size="11" fill="#262626">150</text>
<text x="513.9" y="542.2" text-anchor="middle" font-family="Liberation Sans" font-size="11" fill="#262626">200</text>
<text x="542.9" y="542.2" text-anchor="middle" font-family="Liberation Sans" font-size="11" fill="#262626">250</text>
<text x="571.6" y="542.2" text-anchor="middle" font-family="Liberation Sans" font-size="11" fill="#262626">4.5</text>
<text x="613.6" y="542.2" text-anchor="middle" font-family="Liberation Sans" font-size="11" fill="#262626">5</text>
<text x="655.6" y="542.2" text-anchor="middle" font-family="Liberation Sans" font-size="11" fill="#262626">5.5</text>
<text x="359.2" y="553.9" text-anchor="middle" font-family="Liberation Sans" font-size="11.5" fill="#262626">Ambient</text>
<text x="487.5" y="553.9" text-anchor="middle" font-family="Liberation Sans" font-size="11.5" fill="#262626">Cooling</text>
<text x="616" y="553.9" text-anchor="middle" font-family="Liberation Sans" font-size="11.5" fill="#262626">Pressure</text>
<text x="655.5" y="554.6" font-family="Liberation Sans" font-size="10.6" fill="#262626">×10</text><text x="674.6" y="550.6" font-family="Liberation Sans" font-size="8" fill="#262626">5</text>
<text transform="translate(291.3 258.2) rotate(-90)" text-anchor="middle" font-family="Liberation Sans" font-size="11.5" fill="#262626">Ambient</text>
<text transform="translate(271 366.5) rotate(-90)" text-anchor="middle" font-family="Liberation Sans" font-size="11.5" fill="#262626">Cooling</text>
<text transform="translate(275 476.8) rotate(-90)" text-anchor="middle" font-family="Liberation Sans" font-size="11.5" fill="#262626">Pressure</text>
</svg>
<!-- /PLOTS -->


<!-- right panel -->
<div class="a" style="left:726px;top:152px;width:1px;height:424px;background:#a8a8a8"></div>
<div class="a" style="left:727px;top:152px;width:242px;height:424px;background:#f5f5f5"></div>
<div class="a" style="left:727px;top:152px;width:242px;height:19px;background:#f5f5f5"></div>
<div class="a" style="left:727px;top:171px;width:242px;height:1px;background:#9a9a9a"></div>
<div class="t" style="left:730.8px;top:154.8px;color:#1a1a1a">Configure Experiment</div>
<!-- tab group -->
<div class="a" style="left:737px;top:182px;width:222px;height:350px;border:1px solid #c4c4c4;background:#f5f5f5"></div>
<div class="a" style="left:737px;top:182px;width:222px;height:24px;background:#e6e6e6;border:1px solid #c4c4c4"></div>
<div class="a" style="left:737px;top:182px;width:68px;height:24px;background:#f5f5f5;border:1px solid #c4c4c4;border-bottom:none"></div>
<div class="a" style="left:737px;top:183px;width:2px;height:23px;background:#b4b4b4"></div>
<div class="a" style="left:894px;top:183px;width:1px;height:22px;background:#c8c8c8"></div>
<div class="t" style="left:747px;top:188.3px;color:#1a1a1a">Signals</div>
<div class="t" style="left:814px;top:188.3px;color:#1a1a1a">Boundaries</div>
<div class="t" style="left:743.7px;top:216px;color:#1a1a1a">Signal injection mode</div>
<div class="t" style="left:743.7px;top:248.6px;color:#1a1a1a">Signal type</div>
<div class="t" style="left:743.7px;top:286.5px;color:#1a1a1a">Pulse width</div>
<div class="t" style="left:743.7px;top:319.4px;color:#1a1a1a">Number of pulses</div>
<div class="t" style="left:743.7px;top:347.7px;color:#1a1a1a">Pulse amplitude ranges</div>
<div class="a" style="left:738px;top:206px;width:220px;height:100px;overflow:hidden">
 <div class="a" style="left:131px;top:5px;width:120px;height:23px;border:1px solid #8a8a8a;border-radius:5px;background:#f8f8f8"></div>
 <div class="a" style="left:131px;top:38px;width:120px;height:22.5px;border:1px solid #8a8a8a;border-radius:5px;background:#f8f8f8"></div>
 <div class="t" style="left:136px;top:10.2px;color:#1a1a1a">Replace</div>
 <div class="t" style="left:136px;top:42.6px;color:#1a1a1a">Random pulses</div>
</div>
<div class="a" style="left:880px;top:281px;width:73px;height:23px;border:1px solid #8c8c8c;background:#fff"></div>
<div class="t" style="left:880px;top:286.5px;width:68px;text-align:right;color:#1a1a1a">100</div>
<div class="a" style="left:880px;top:314px;width:73px;height:22px;border:1px solid #8c8c8c;border-radius:0 5px 5px 0;background:#f5f5f5"></div>
<div class="a" style="left:881px;top:315px;width:50px;height:20px;background:#fff;border-right:1px solid #8c8c8c"></div>
<div class="a" style="left:931px;top:325px;width:21px;height:1px;background:#8c8c8c"></div>
<div class="t" style="left:880px;top:319.4px;width:45.7px;text-align:right;color:#1a1a1a">200</div>
<svg class="a" style="left:930px;top:314px" width="23" height="22"><path d="M8.3 7.8 L15.9 7.8 L12.1 4.3 Z M8.3 14.8 L15.9 14.8 L12.1 18.6 Z" fill="#606060"/></svg>
<!-- table -->
<div class="a" style="left:743px;top:373px;width:210px;height:100px;border:1px solid #a0a0a0;background:#fff"></div>
<div class="a" style="left:744px;top:374px;width:208px;height:26px;background:#f2f2f2"></div>
<div class="a" style="left:744px;top:400px;width:39px;height:70px;background:#f2f2f2"></div>
<div class="a" style="left:783px;top:423px;width:169px;height:24px;background:#f2f2f2"></div>
<div class="a" style="left:846px;top:374px;width:53px;height:26px;background:#d2d2d2"></div>
<div class="a" style="left:744px;top:447px;width:39px;height:23px;background:#d2d2d2"></div>
<div class="a" style="left:846px;top:447px;width:53px;height:23px;background:#d2d2d2"></div>
<div class="a" style="left:744px;top:470px;width:208px;height:2px;background:#fff"></div>
<div class="a" style="left:744px;top:400px;width:208px;height:1px;background:#a0a0a0"></div>
<div class="a" style="left:744px;top:423px;width:208px;height:1px;background:#a0a0a0"></div>
<div class="a" style="left:744px;top:446px;width:208px;height:1px;background:#a0a0a0"></div>
<div class="a" style="left:744px;top:469px;width:208px;height:1px;background:#a0a0a0"></div>
<div class="a" style="left:783px;top:374px;width:1px;height:96px;background:#a0a0a0"></div>
<div class="a" style="left:845px;top:374px;width:1px;height:96px;background:#a0a0a0"></div>
<div class="a" style="left:899px;top:374px;width:1px;height:96px;background:#a0a0a0"></div>
<div class="t" style="left:787.4px;top:381.5px;font-weight:700;color:#1c1c2c">Signal</div>
<div class="t" style="left:850px;top:381.5px;font-weight:700;color:#1c1c2c">Min</div>
<div class="t" style="left:903px;top:381.5px;font-weight:700;color:#1c1c2c">Max</div>
<div class="t" style="left:742.5px;top:404.8px;width:39px;text-align:center;color:#666">1</div>
<div class="t" style="left:742.5px;top:428.2px;width:39px;text-align:center;color:#666">2</div>
<div class="t" style="left:742.5px;top:451.8px;width:39px;text-align:center;color:#666">3</div>
<div class="t" style="left:787.4px;top:404.8px;color:#333">Ambient</div>
<div class="t" style="left:787.4px;top:428.2px;color:#333">Cooling</div>
<div class="t" style="left:787.4px;top:451.8px;color:#333">Pressure</div>
<div class="t" style="left:846px;top:404.8px;width:49px;text-align:right;color:#333">800</div>
<div class="t" style="left:846px;top:428.2px;width:49px;text-align:right;color:#333">50</div>
<div class="t" style="left:846px;top:451.8px;width:49px;text-align:right;color:#333">450000</div>
<div class="t" style="left:900px;top:404.8px;width:48.5px;text-align:right;color:#333">2000</div>
<div class="t" style="left:900px;top:428.2px;width:48.5px;text-align:right;color:#333">250</div>
<div class="t" style="left:900px;top:451.8px;width:48.5px;text-align:right;color:#333">550000</div>
<!-- apply -->
<div class="a" style="left:918px;top:541.5px;width:41px;height:23.5px;border:1px solid #2f88d8;border-radius:5px;background:#f5f5f5"></div>
<div class="t" style="left:918px;top:546.8px;width:41px;text-align:center;color:#1a1a1a">Apply</div>


<!-- status bar -->
<div class="a" style="left:1px;top:575px;width:968px;height:25px;background:#e6e6e6"></div>
<div class="a" style="left:1px;top:575px;width:227px;height:1px;background:#c8c8c8"></div>
<div class="a" style="left:228px;top:576px;width:741px;height:1px;background:#c8c8c8"></div>
<div class="a" style="left:228px;top:575px;width:1px;height:25px;background:#c4c4c4"></div>
<div class="a" style="left:726px;top:575px;width:1px;height:25px;background:#c4c4c4"></div>
<svg class="a" style="left:0;top:575px" width="970" height="25">
 <path d="M8.9 7 V18.75" stroke="#9c9c9c" stroke-width="2"/><path d="M17 7 L10.2 12.9 L17 18.75 Z" fill="#9c9c9c"/>
 <path d="M962 7 V18.75" stroke="#999" stroke-width="2"/><path d="M954 7 L960.8 12.9 L954 18.75 Z" fill="#999"/>
</svg>

<div class="a" style="left:0;top:599px;width:970px;height:1px;background:#b8b8b8"></div>
</body></html>
